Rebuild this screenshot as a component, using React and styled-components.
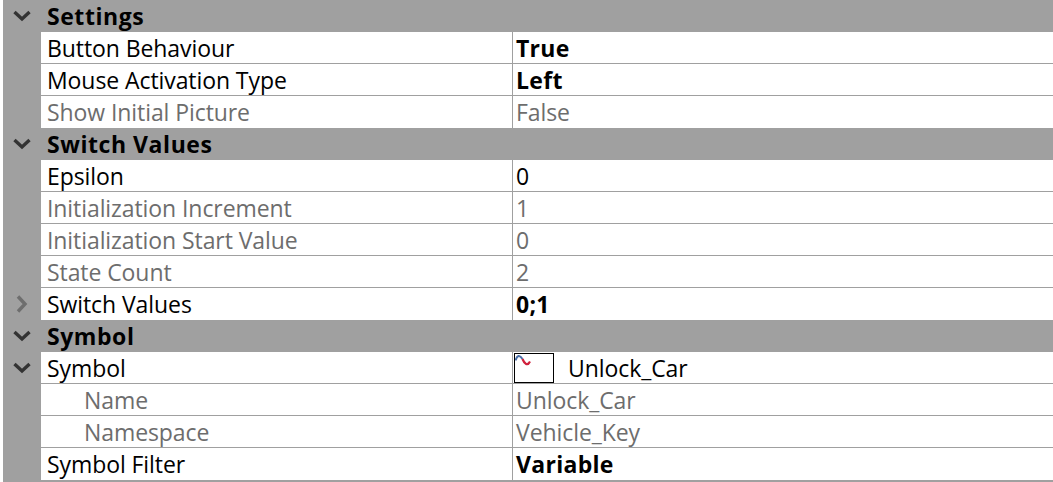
import React from 'react';
import styled, { createGlobalStyle } from 'styled-components';

const GlobalStyle = createGlobalStyle`
  html, body {
    margin: 0;
    padding: 0;
    background: #fff;
    overflow: hidden;
  }
`;

const Grid = styled.div`
  width: 1050px;
  margin-left: 3px;
  font-family: "Open Sans", "Noto Sans", sans-serif;
  font-size: 23px;
  letter-spacing: -0.08px;
  color: #000;
  border-bottom: 2px solid #a0a0a0;
`;

const GroupRow = styled.div`
  height: 32px;
  display: flex;
  align-items: flex-start;
  background: #a0a0a0;
  font-weight: 700;
`;

const Gutter = styled.div`
  width: 38px;
  height: 100%;
  flex: none;
  display: flex;
  align-items: center;
  justify-content: center;
  background: #a0a0a0;
`;

const GroupTitle = styled.div`
  padding-left: 6px;
  line-height: 33px;
  letter-spacing: 0.55px;
`;

const Row = styled.div`
  height: 32px;
  display: flex;
  box-sizing: border-box;
  border-bottom: ${(p) => (p.$last ? '0' : '1px solid #a0a0a0')};
`;

const NameCell = styled.div`
  width: 472px;
  flex: none;
  box-sizing: border-box;
  padding-left: ${(p) => (p.$child ? '43px' : '6px')};
  border-right: 1px solid #a0a0a0;
  background: #fff;
  line-height: 33px;
  white-space: nowrap;
  color: ${(p) => (p.$muted ? '#6d6d6d' : '#000')};
`;

const ValueCell = styled.div`
  flex: 1;
  padding-left: 3px;
  background: #fff;
  display: flex;
  align-items: flex-start;
  line-height: 33px;
  white-space: nowrap;
  font-weight: ${(p) => (p.$bold ? 700 : 400)};
  letter-spacing: ${(p) => (p.$bold ? '0.3px' : '-0.08px')};
  color: ${(p) => (p.$muted ? '#6d6d6d' : '#000')};
`;

const SymbolThumb = styled.div`
  width: 38px;
  height: 28px;
  border: 1px solid #000;
  margin: 1px 14px 0 -2px;
  background: #fff;
  flex: none;
  display: flex;
  align-items: flex-start;
`;

const Chevron = ({ dir = 'down', color = '#333' }) => (
  <svg width="18" height="18" viewBox="0 0 18 18" fill="none">
    <path
      d={dir === 'down' ? 'M1.5 5 L9 12 L16.5 5' : 'M5 1.5 L12 9 L5 16.5'}
      stroke={color}
      strokeWidth="3.4"
    />
  </svg>
);

const SymbolIcon = () => (
  <SymbolThumb>
    <svg width="20" height="14" viewBox="0 0 20 14" fill="none">
      <path d="M0.5 6.5 C2 1.5 4.5 0 7.5 5" stroke="#4a6fa8" strokeWidth="2" />
      <path d="M7.5 5 C9.5 10 12.5 12.5 15 7.5" stroke="#d0213c" strokeWidth="2.2" />
    </svg>
  </SymbolThumb>
);

const Prop = ({ name, value, bold, muted, child, chevron, last, icon }) => (
  <Row $last={last}>
    <Gutter>{chevron}</Gutter>
    <NameCell $muted={muted} $child={child}>{name}</NameCell>
    <ValueCell $bold={bold} $muted={muted}>
      {icon}
      {value}
    </ValueCell>
  </Row>
);

const Group = ({ title }) => (
  <GroupRow>
    <Gutter><Chevron /></Gutter>
    <GroupTitle>{title}</GroupTitle>
  </GroupRow>
);

export default function App() {
  return (
    <>
      <GlobalStyle />
      <Grid>
        <Group title="Settings" />
        <Prop name="Button Behaviour" value="True" bold />
        <Prop name="Mouse Activation Type" value="Left" bold />
        <Prop name="Show Initial Picture" value="False" muted last />
        <Group title="Switch Values" />
        <Prop name="Epsilon" value="0" />
        <Prop name="Initialization Increment" value="1" muted />
        <Prop name="Initialization Start Value" value="0" muted />
        <Prop name="State Count" value="2" muted />
        <Prop name="Switch Values" value="0;1" bold last chevron={<Chevron dir="right" color="#6e6e6e" />} />
        <Group title="Symbol" />
        <Prop name="Symbol" value="Unlock_Car" chevron={<Chevron />} icon={<SymbolIcon />} />
        <Prop name="Name" value="Unlock_Car" muted child />
        <Prop name="Namespace" value="Vehicle_Key" muted child />
        <Prop name="Symbol Filter" value="Variable" bold last />
      </Grid>
    </>
  );
}
